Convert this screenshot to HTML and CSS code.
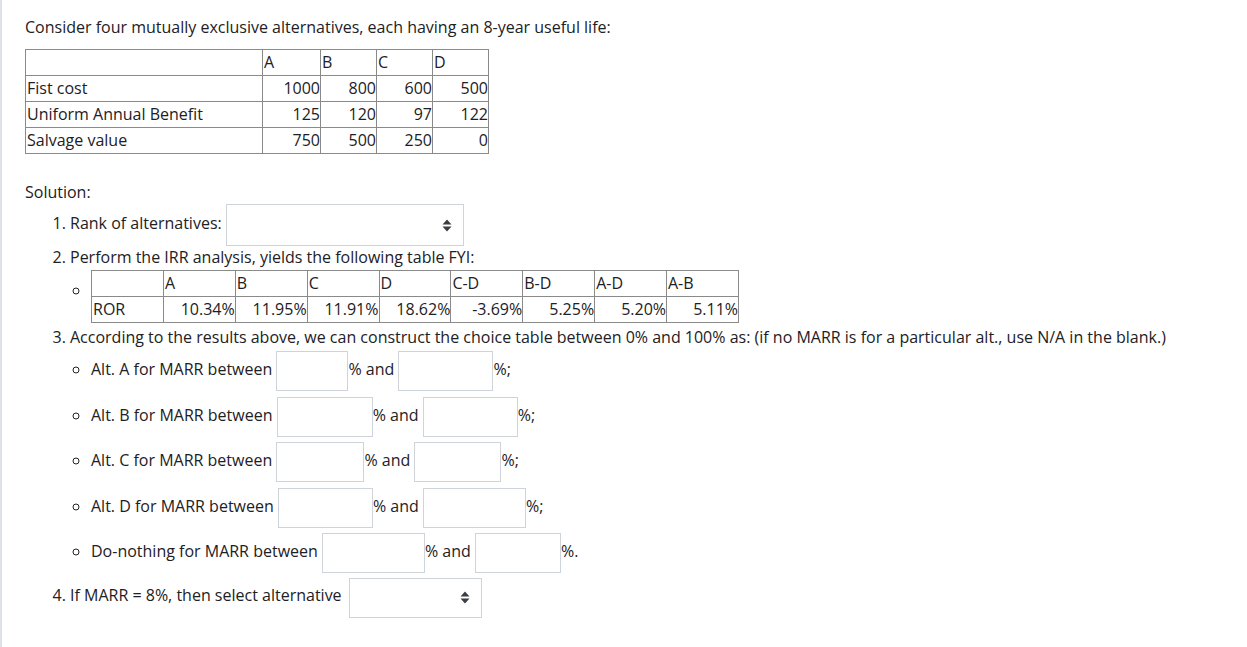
FILE: index.html
```html
<!DOCTYPE html>
<html lang="en">
<head>
<meta charset="utf-8">
<title>IRR analysis</title>
<link rel="stylesheet" href="styles.css">
</head>
<body>
<div class="page">
  <p class="intro">Consider four mutually exclusive alternatives, each having an 8-year useful life:</p>
  <table class="data">
    <tr class="head"><td class="c-label"></td><td class="c-a">A</td><td class="c-b">B</td><td class="c-c">C</td><td class="c-d">D</td></tr>
    <tr><td>Fist cost</td><td class="num">1000</td><td class="num">800</td><td class="num">600</td><td class="num">500</td></tr>
    <tr><td>Uniform Annual Benefit</td><td class="num">125</td><td class="num">120</td><td class="num">97</td><td class="num">122</td></tr>
    <tr><td>Salvage value</td><td class="num">750</td><td class="num">500</td><td class="num">250</td><td class="num">0</td></tr>
  </table>
  <p class="sol">Solution:</p>
  <ol class="steps">
    <li class="step">Rank of alternatives: <span class="select sel-rank"><svg class="arrows" width="10" height="13" viewBox="0 0 10 13"><path d="M5 0.5 L9.5 5.5 H0.5 Z M0.5 7.5 H9.5 L5 12.5 Z" fill="#3a3f45"/></svg></span></li>
    <li class="step">Perform the IRR analysis, yields the following table FYI:
      <ul class="sub">
        <li>
          <table class="ror">
            <tr class="head"><td></td><td>A</td><td>B</td><td>C</td><td>D</td><td>C-D</td><td>B-D</td><td>A-D</td><td>A-B</td></tr>
            <tr><td>ROR</td><td class="num">10.34%</td><td class="num">11.95%</td><td class="num">11.91%</td><td class="num">18.62%</td><td class="num">-3.69%</td><td class="num">5.25%</td><td class="num">5.20%</td><td class="num">5.11%</td></tr>
          </table>
        </li>
      </ul>
    </li>
    <li class="step">According to the results above, we can construct the choice table between 0% and 100% as: (if no MARR is for a particular alt., use N/A in the blank.)
      <ul class="sub">
        <li>Alt. A for MARR between <input class="box w72" type="text">% and <input class="box w95" type="text">%;</li>
        <li>Alt. B for MARR between <input class="box w96" type="text">% and <input class="box w95" type="text">%;</li>
        <li>Alt. C for MARR between <input class="box w88" type="text">% and <input class="box w87" type="text">%;</li>
        <li>Alt. D for MARR between <input class="box w95" type="text">% and <input class="box w103" type="text">%;</li>
        <li>Do-nothing for MARR between <input class="box w103" type="text">% and <input class="box w86" type="text">%.</li>
      </ul>
    </li>
    <li class="step">If MARR = 8%, then select alternative <span class="select sel-alt"><svg class="arrows" width="10" height="13" viewBox="0 0 10 13"><path d="M5 0.5 L9.5 5.5 H0.5 Z M0.5 7.5 H9.5 L5 12.5 Z" fill="#3a3f45"/></svg></span></li>
  </ol>
</div>
</body>
</html>
```
FILE: styles.css
```css
html, body {
  margin: 0;
  padding: 0;
  background: #ffffff;
}

body {
  font-family: "Segoe UI", "Open Sans", "Noto Sans", sans-serif;
  font-size: 16px;
  line-height: 22.5px;
  color: #1d2125;
}

.page {
  border-left: 2px solid #dee2e6;
  min-height: 647px;
  box-sizing: border-box;
  padding: 16px 0 0 23px;
}

.intro {
  margin: 0 0 10px;
}

table {
  border-collapse: collapse;
}

table td {
  border: 1px solid #8a8a8a;
  padding: 0 0 0 1px;
  height: 25px;
  line-height: 25px;
  vertical-align: middle;
  white-space: nowrap;
}

td.num {
  text-align: right;
  padding: 0;
}

.data .c-label { width: 235px; }
.data .c-a { width: 56px; }
.data .c-b { width: 54px; }
.data .c-c { width: 54px; }
.data .c-d { width: 54px; }

.sol {
  margin: 27px 0 1px;
}

.steps {
  margin: 0;
  padding-left: 45px;
}

.step {
  padding: 0;
}

.sub {
  list-style-type: circle;
  margin: 0;
  padding-left: 21px;
}

.ror {
  table-layout: fixed;
  width: 648px;
  margin: 1px 0 3px;
}

.select {
  display: inline-block;
  box-sizing: border-box;
  height: 42px;
  border: 1px solid #ced4da;
  border-radius: 0;
  vertical-align: middle;
  position: relative;
  background: #fff;
}

.sel-rank {
  width: 238px;
  margin-left: 0;
}

.sel-alt {
  width: 133px;
  height: 40px;
  margin: 2px 0 0 3px;
}

.arrows {
  position: absolute;
  right: 11px;
  top: 50%;
  margin-top: -6.5px;
}

.box {
  box-sizing: border-box;
  height: 40px;
  border: 1px solid #ced4da;
  border-radius: 0;
  padding: 0;
  margin: 3px 0 2.5px;
  font: inherit;
  vertical-align: middle;
  background: #fff;
  outline: none;
}

.w72 { width: 72px; }
.w86 { width: 86px; }
.w87 { width: 87px; }
.w88 { width: 88px; }
.w95 { width: 95px; }
.w96 { width: 96px; }
.w103 { width: 103px; }
```
